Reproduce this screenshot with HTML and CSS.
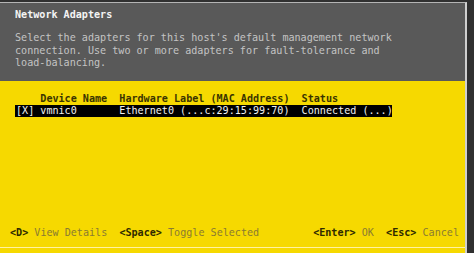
FILE: index.html
```html
<!DOCTYPE html>
<html>
<head>
<meta charset="utf-8">
<link rel="stylesheet" href="styles.css">
</head>
<body>
<div class="frame">
  <div class="top">
    <div class="title">Network Adapters</div>
    <div class="desc">Select the adapters for this host's default management network
connection. Use two or more adapters for fault-tolerance and
load-balancing.</div>
  </div>
  <div class="bottom">
    <div class="head">    Device Name  Hardware Label (MAC Address)  Status</div>
    <div class="row">[X] vmnic0       Ethernet0 (...c:29:15:99:70)  Connected (...)</div>
    <div class="foot">
      <div class="keys"><b>&lt;D&gt;</b> View Details  <b>&lt;Space&gt;</b> Toggle Selected</div>
      <div class="keys"><b>&lt;Enter&gt;</b> OK  <b>&lt;Esc&gt;</b> Cancel</div>
    </div>
    <div class="rule"></div>
  </div>
</div>
</body>
</html>
```
FILE: styles.css
```css
html, body {
  margin: 0;
  padding: 0;
}
body {
  width: 474px;
  height: 253px;
  overflow: hidden;
  background: #303030;
  font-family: "DejaVu Sans Mono", "Liberation Mono", monospace;
  font-size: 10.1px;
}
.frame {
  margin-top: 2px;
  width: 467px;
  height: 251px;
  border-top: 1px solid #b4b4b4;
  border-right: 2px solid #cfcfcf;
  display: flex;
  flex-direction: column;
  box-sizing: border-box;
}
.top {
  background: #595959;
  height: 78px;
  padding: 5px 0 0 15px;
  box-sizing: border-box;
}
.title {
  color: #f4f4f4;
  font-weight: bold;
  line-height: 13px;
}
.desc {
  margin-top: 11px;
  color: #c4c4c4;
  line-height: 12.7px;
  white-space: pre;
}
.bottom {
  flex: 1;
  background: #f6d900;
  display: flex;
  flex-direction: column;
  padding-top: 12px;
}
.head {
  margin-left: 16px;
  color: #3a3400;
  font-weight: bold;
  line-height: 12px;
  white-space: pre;
}
.row {
  margin-left: 15px;
  width: 377px;
  padding-left: 1px;
  box-sizing: border-box;
  background: #000;
  color: #f2f2f2;
  line-height: 12px;
  white-space: pre;
}
.foot {
  margin-top: auto;
  display: flex;
  justify-content: space-between;
  padding: 0 6px 0 10px;
  line-height: 12px;
}
.keys {
  color: #8a7b32;
  white-space: pre;
}
.keys b {
  color: #2e2a00;
}
.rule {
  margin-top: 8px;
  margin-bottom: 5px;
  height: 1px;
  background: #fff2a0;
}
```
